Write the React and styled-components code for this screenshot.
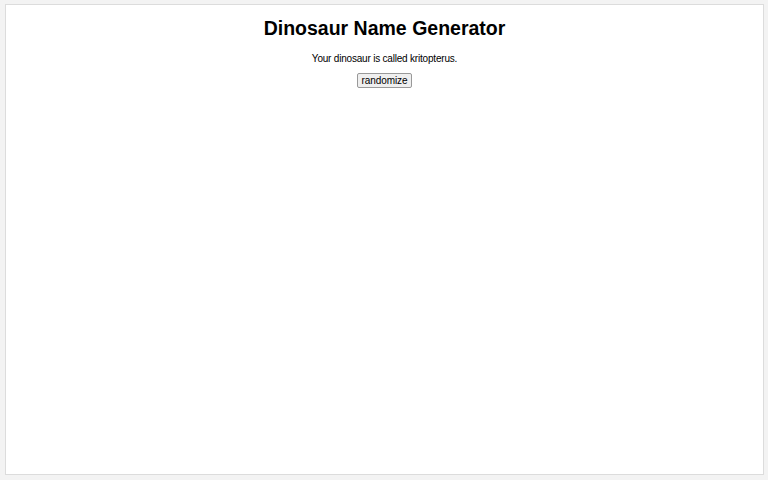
import React, { useState } from 'react';
import styled, { createGlobalStyle } from 'styled-components';

const names = ['kritopterus', 'velocisaurus', 'brontodon', 'megaraptor', 'stegonyx'];

const GlobalStyle = createGlobalStyle`
  html, body {
    margin: 0;
    background: #f3f3f3;
  }
  body {
    padding: 4px 4px 5px 5px;
    font-family: "Liberation Sans", Arial, sans-serif;
  }
`;

const Panel = styled.main`
  height: 469px;
  background: #fff;
  border: 1px solid #dcdcdc;
  display: flex;
  flex-direction: column;
  align-items: center;
`;

const Title = styled.h1`
  margin: 12px 0 0;
  font-size: 19.5px;
  font-weight: bold;
  color: #000;
`;

const Message = styled.p`
  margin: 13px 0 0;
  font-size: 10px;
  letter-spacing: -0.2px;
  color: #000;
`;

const Button = styled.button`
  margin-top: 9px;
  font-family: "Liberation Sans", Arial, sans-serif;
  font-size: 10px;
  letter-spacing: -0.1px;
  padding: 1px 4px;
  background: #efefef;
  border: 1px solid #999;
  border-radius: 2px;
  color: #000;
  cursor: pointer;
`;

const App = () => {
  const [name, setName] = useState(names[0]);

  return (
    <>
      <GlobalStyle />
      <Panel>
        <Title>Dinosaur Name Generator</Title>
        <Message>Your dinosaur is called {name}.</Message>
        <Button onClick={() => setName(names[Math.floor(Math.random() * names.length)])}>
          randomize
        </Button>
      </Panel>
    </>
  );
};

export default App;
